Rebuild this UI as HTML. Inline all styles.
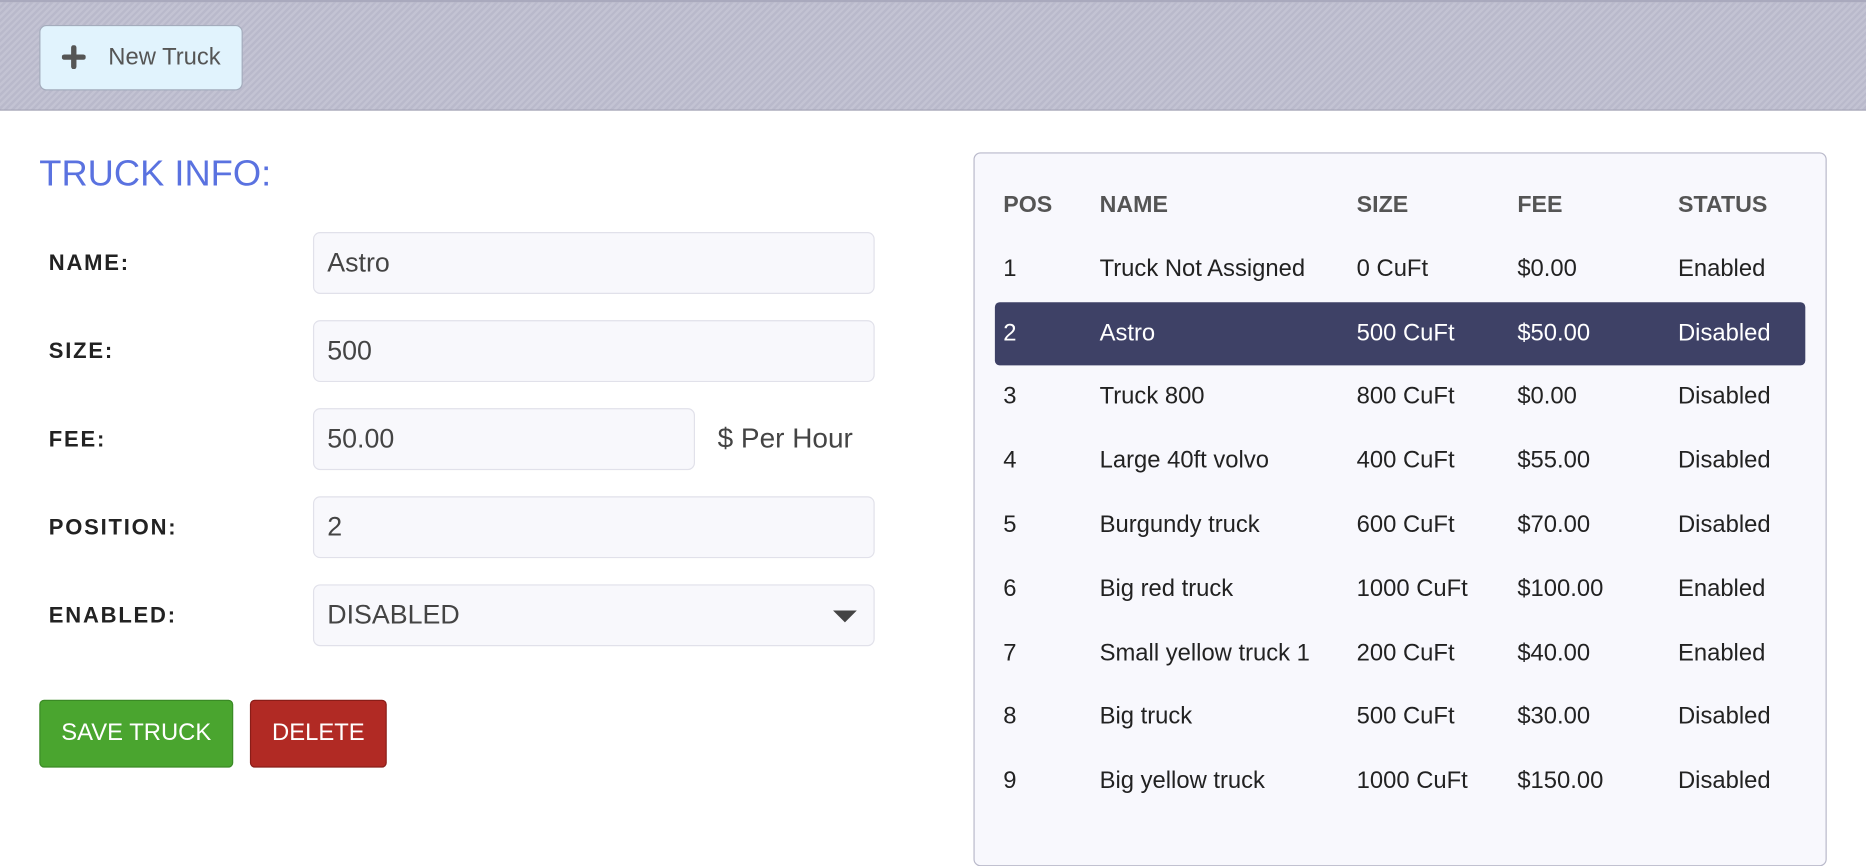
<!DOCTYPE html>
<html><head><meta charset="utf-8"><style>
html,body{margin:0;padding:0;width:1866px;height:832px;overflow:hidden;background:#fff;font-family:"Liberation Sans",Arial,sans-serif}
#w{position:absolute;left:0;top:0;width:1568px;height:699px;transform:scale(1.19005);transform-origin:0 0}
.hdr{position:absolute;left:0;top:0;width:1568px;height:93px;border-top:2px solid #a9a9bd;border-bottom:1px solid #a3a3b5;box-sizing:border-box;
background:repeating-linear-gradient(135deg,#c3c3d3 0 2px,#b9b9cb 2px 4px)}
.nb{position:absolute;left:33px;top:19px;width:171px;height:55px;box-sizing:border-box;background:#e1f3fd;border:1.5px solid #a4acbc;border-radius:6px}
.nb span{position:absolute;left:57px;top:15px;font-size:20px;color:#555}
.abs{position:absolute}
.title{left:33px;top:129px;font-size:30.5px;color:#5a72e0}
.lab{left:41px;font-size:18.5px;font-weight:bold;letter-spacing:1.5px;color:#222}
.inp{left:263px;width:472px;height:52px;box-sizing:border-box;background:#f8f8fc;border:1.5px solid #e1e1ea;border-radius:6px;font-size:22.5px;color:#444;padding:12px 0 0 11px}
.btn{top:588px;height:57px;box-sizing:border-box;border-radius:4px;color:#fff;font-size:20px;text-align:center;padding-top:16px}
.panel{left:818px;top:128px;width:717px;height:600px;box-sizing:border-box;background:#f8f8fd;border:1.5px solid #b9b9ca;border-radius:6px}
.c{position:absolute;font-size:20px;color:#222}
.h{font-weight:bold;color:#555;font-size:19.5px}
.sel{left:836px;top:254px;width:681px;height:53px;background:#3e4166;border-radius:4px}
</style></head><body><div id="w">
<div class="hdr"><div class="nb">
<svg style="position:absolute;left:18px;top:16px" width="20" height="20" viewBox="0 0 20 20"><path d="M10 2V18M2 10H18" stroke="#555" stroke-width="4.5" stroke-linecap="round"/></svg>
<span>New Truck</span></div></div>
<div class="abs title">TRUCK INFO:</div>
<div class="abs lab" style="top:210px">NAME:</div>
<div class="abs lab" style="top:284px">SIZE:</div>
<div class="abs lab" style="top:358px">FEE:</div>
<div class="abs lab" style="top:432px">POSITION:</div>
<div class="abs lab" style="top:506px">ENABLED:</div>
<div class="abs inp" style="top:195px">Astro</div>
<div class="abs inp" style="top:269px">500</div>
<div class="abs inp" style="top:343px;width:321px">50.00</div>
<div class="abs" style="left:603px;top:355px;font-size:23.5px;color:#444">$ Per Hour</div>
<div class="abs inp" style="top:417px">2</div>
<div class="abs inp" style="top:491px">DISABLED
<svg style="position:absolute;left:436px;top:21px" width="20" height="11"><path d="M0 0H20L10 10Z" fill="#444"/></svg></div>
<div class="abs btn" style="left:33px;width:163px;background:#4aa52f;border:1px solid #3a8a25">SAVE TRUCK</div>
<div class="abs btn" style="left:210px;width:115px;background:#b12a24;border:1px solid #8a1d18">DELETE</div>
<div class="abs panel"></div>
<div class="abs sel"></div>
<div id="t"></div>
<script>
var cols=[843,924,1140,1275,1410];
var rows=[["POS","NAME","SIZE","FEE","STATUS"],["1","Truck Not Assigned","0 CuFt","$0.00","Enabled"],["2","Astro","500 CuFt","$50.00","Disabled"],["3","Truck 800","800 CuFt","$0.00","Disabled"],["4","Large 40ft volvo","400 CuFt","$55.00","Disabled"],["5","Burgundy truck","600 CuFt","$70.00","Disabled"],["6","Big red truck","1000 CuFt","$100.00","Enabled"],["7","Small yellow truck 1","200 CuFt","$40.00","Enabled"],["8","Big truck","500 CuFt","$30.00","Disabled"],["9","Big yellow truck","1000 CuFt","$150.00","Disabled"]];
var h="";rows.forEach(function(r,i){var y=172+i*53.8-11;r.forEach(function(t,j){h+='<div class="c'+(i==0?' h':'')+'" style="left:'+cols[j]+'px;top:'+y+'px;'+(i==2?'color:#fff':'')+'">'+t+'</div>';});});
document.getElementById("t").innerHTML=h;
</script>
</div></body></html>
